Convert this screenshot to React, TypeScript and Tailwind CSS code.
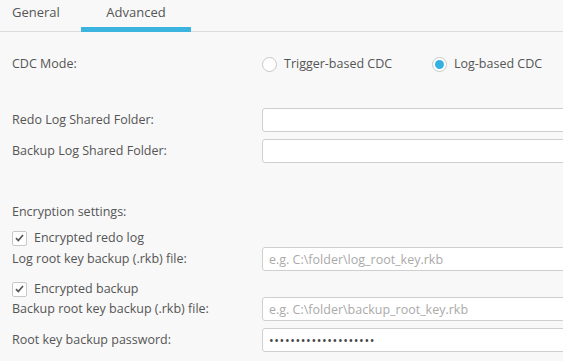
import { useState } from 'react'

const font = { fontFamily: '"Open Sans", "Noto Sans", sans-serif' }

function Radio({ checked, label }: { checked: boolean; label: string }) {
  return (
    <div className="flex items-center">
      <span className="flex h-[15px] w-[15px] items-center justify-center rounded-full border border-[#c8c8c8] bg-white">
        {checked && <span className="h-[9px] w-[9px] rounded-full bg-[#35b0e3]" />}
      </span>
      <span className="ml-[7px]">{label}</span>
    </div>
  )
}

function Checkbox({ label }: { label: string }) {
  return (
    <div className="flex h-[16px] items-center">
      <span className="flex h-[15px] w-[15px] items-center justify-center rounded-[2px] border border-[#c8c8c8] bg-white">
        <svg width="9" height="8" viewBox="0 0 9 8">
          <path d="M1 4.2 L3.3 6.5 L8 1" fill="none" stroke="#555" strokeWidth="1.7" />
        </svg>
      </span>
      <span className="ml-[7px]">{label}</span>
    </div>
  )
}

function Field({ label, placeholder, value, type = 'text', className = '' }: {
  label: string
  placeholder?: string
  value?: string
  type?: string
  className?: string
}) {
  return (
    <div className={`grid h-[24px] grid-cols-[250px_1fr] items-center ${className}`}>
      <span>{label}</span>
      <input
        type={type}
        defaultValue={value}
        placeholder={placeholder}
        className={`h-[24px] w-[330px] rounded-[3px] border border-[#cfcfcf] bg-white px-[6px] text-[12.5px] text-[#444] placeholder:text-[#aaa] focus:outline-none ${type === 'password' ? 'tracking-[0.6px]' : ''}`}
        style={font}
      />
    </div>
  )
}

export default function App() {
  const [tab, setTab] = useState('Advanced')

  return (
    <div className="h-[361px] w-[563px] overflow-hidden bg-[#f8f8f8] text-[12.5px] text-[#555]" style={font}>
      <div className="flex h-[32px] border-b border-[#dcdcdc]">
        {['General', 'Advanced'].map((t) => (
          <button
            key={t}
            onClick={() => setTab(t)}
            className={`relative text-[13px] text-[#555] ${t === 'General' ? 'w-[81px] pl-[12px] text-left' : 'w-[110px]'}`}
          >
            <span className="relative -top-[3px]">{t}</span>
            {tab === t && t === 'Advanced' && (
              <span className="absolute bottom-[-1px] left-0 h-[5px] w-full bg-[#3cb4e0]" />
            )}
          </button>
        ))}
      </div>

      <div className="px-[12px]">
        <div className="mt-[20px] grid h-[24px] grid-cols-[250px_1fr] items-center">
          <span>CDC Mode:</span>
          <div className="flex">
            <div className="w-[170px]">
              <Radio checked={false} label="Trigger-based CDC" />
            </div>
            <Radio checked label="Log-based CDC" />
          </div>
        </div>

        <Field label="Redo Log Shared Folder:" className="mt-[32px]" />
        <Field label="Backup Log Shared Folder:" className="mt-[7px]" />

        <div className="mt-[37px] flex h-[24px] items-center">Encryption settings:</div>

        <div className="mt-[6px]">
          <Checkbox label="Encrypted redo log" />
        </div>
        <Field label="Log root key backup (.rkb) file:" placeholder="e.g. C:\folder\log_root_key.rkb" className="mt-[1px]" />

        <div className="mt-[10px]">
          <Checkbox label="Encrypted backup" />
        </div>
        <Field label="Backup root key backup (.rkb) file:" placeholder="e.g. C:\folder\backup_root_key.rkb" />
        <Field label="Root key backup password:" type="password" value="12345678901234567890" className="mt-[7px]" />
      </div>
    </div>
  )
}
